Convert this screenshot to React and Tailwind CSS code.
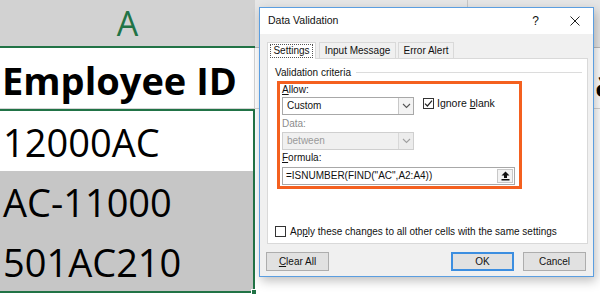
import React from 'react';

const ui = { fontFamily: '"Liberation Sans", Arial, sans-serif' };
const cell = { fontFamily: '"Open Sans", "Noto Sans", sans-serif' };

function Check({ checked }) {
  return (
    <span className="flex h-[11px] w-[11px] shrink-0 items-center justify-center border border-[#333] bg-white">
      {checked && (
        <svg width="9" height="9" viewBox="0 0 9 9">
          <path d="M1 4.6 L3.4 7 L8 1.6" fill="none" stroke="#222" strokeWidth="1.2" />
        </svg>
      )}
    </span>
  );
}

function Chevron({ color = '#555' }) {
  return (
    <svg width="9" height="6" viewBox="0 0 9 6">
      <path d="M1 1 L4.5 4.5 L8 1" fill="none" stroke={color} strokeWidth="1.1" />
    </svg>
  );
}

function Select({ value, disabled }) {
  return (
    <div
      className={`flex h-[18px] w-[132px] items-center border ${
        disabled ? 'border-[#cfcfcf] bg-[#f0f0f0] text-[#9a9a9a]' : 'border-[#a8a8a8] bg-white text-[#111]'
      }`}
    >
      <span className="flex-1 pl-[4px] text-[10px] leading-none">{value}</span>
      <span
        className={`flex h-full w-[15px] items-center justify-center border-l ${
          disabled ? 'border-[#d8d8d8] bg-[#ececec]' : 'border-[#c8c8c8] bg-[#f3f3f3]'
        }`}
      >
        <Chevron color={disabled ? '#a0a0a0' : '#555'} />
      </span>
    </div>
  );
}

function Btn({ children, primary, className = '' }) {
  return (
    <div
      className={`flex h-[19px] w-[63px] items-center justify-center bg-[#e1e1e1] text-[10px] text-[#111] ${
        primary ? 'border-2 border-[#3c8ee0]' : 'border border-[#adadad]'
      } ${className}`}
    >
      {children}
    </div>
  );
}

function Dialog() {
  return (
    <div
      className="absolute left-[259px] top-[7px] flex h-[270px] w-[335px] flex-col border border-[#5b9ee0] bg-[#f0f0f0] shadow-[2px_4px_10px_rgba(0,0,0,0.25)]"
      style={ui}
    >
      <div className="flex h-[26px] items-center bg-white pl-[8px] pr-[13px] text-[10.5px] text-[#111]">
        <span className="flex-1">Data Validation</span>
        <span className="mr-[31px] text-[12px]">?</span>
        <svg width="10" height="10" viewBox="0 0 10 10">
          <path d="M0.5 0.5 L9.5 9.5 M9.5 0.5 L0.5 9.5" stroke="#222" strokeWidth="1" />
        </svg>
      </div>

      <div className="px-[7px] pt-[8px]">
        <div className="flex items-end whitespace-nowrap text-[10px] text-[#111]">
          <div className="relative z-10 -mb-px flex h-[17px] w-[49px] items-center justify-center border border-b-0 border-[#d9d9d9] bg-white">
            <span className="border border-dotted border-[#555] px-[2px] leading-[12px]">Settings</span>
          </div>
          <div className="ml-[3px] flex h-[16px] w-[77px] items-center justify-center border border-b-0 border-[#d9d9d9] bg-[#f0f0f0]">
            Input Message
          </div>
          <div className="ml-[2px] flex h-[16px] w-[56px] items-center justify-center border border-b-0 border-[#d9d9d9] bg-[#f0f0f0]">
            Error Alert
          </div>
        </div>

        <div className="h-[186px] w-[321px] border border-[#d9d9d9] bg-white pl-[7px] pr-[5px] pt-[6px] text-[10px] text-[#111]">
          <div className="flex items-center leading-[15px]">
            <span>Validation criteria</span>
            <span className="ml-[5px] h-px flex-1 bg-[#dcdcdc]" />
          </div>

          <div className="ml-[2px] mt-[1px] h-[108px] w-[245px] border-[3px] border-[#f4601f] pl-[2px]">
            <div className="leading-[11px]">
              <span className="underline">A</span>llow:
            </div>
            <div className="mt-[2px] flex items-start">
              <Select value="Custom" />
              <div className="ml-[9px] mt-[1px] flex items-center gap-[3px] whitespace-nowrap">
                <Check checked />
                <span className="text-[10.5px] leading-none">
                  Ignore <span className="underline">b</span>lank
                </span>
              </div>
            </div>
            <div className="mt-[3px] leading-[11px] text-[#8c8c8c]">Data:</div>
            <div className="mt-[3px]">
              <Select value="between" disabled />
            </div>
            <div className="mt-[2px] leading-[11px]">
              <span className="underline">F</span>ormula:
            </div>
            <div className="mt-[4px] flex h-[18px] w-[233px] items-center border border-[#a8a8a8] bg-white">
              <span className="flex-1 pl-[3px] text-[10px] leading-none">=ISNUMBER(FIND("AC",A2:A4))</span>
              <span className="mr-px flex h-[14px] w-[16px] items-center justify-center border border-[#c8c8c8] bg-[#f3f3f3]">
                <svg width="9" height="10" viewBox="0 0 9 10">
                  <path d="M4.5 0.5 L8.5 4.5 L6 4.5 L6 7 L3 7 L3 4.5 L0.5 4.5 Z" fill="#111" />
                  <rect x="0.5" y="8" width="8" height="1.5" fill="#111" />
                </svg>
              </span>
            </div>
          </div>

          <div className="mt-[37px] flex items-center gap-[4px] whitespace-nowrap">
            <Check />
            <span className="leading-none">
              Ap<span className="underline">p</span>ly these changes to all other cells with the same settings
            </span>
          </div>
        </div>

        <div className="mt-[8px] flex">
          <Btn className="ml-[-1px]">
            <span>
              <span className="underline">C</span>lear All
            </span>
          </Btn>
          <div className="flex-1" />
          <Btn primary>OK</Btn>
          <Btn className="ml-[9px]">Cancel</Btn>
        </div>
      </div>
    </div>
  );
}

export default function App() {
  return (
    <div className="relative h-[295px] w-[600px] overflow-hidden bg-white">
      <div className="flex">
        <div className="w-[255px] shrink-0">
          <div className="flex h-[48px] items-center justify-center border-b-2 border-[#217346] bg-[#d2d2d2] text-[34px] leading-none text-[#217346]" style={cell}>
            A
          </div>
          <div className="flex h-[61px] items-center whitespace-nowrap border-b border-r border-[#d4d4d4] pl-[2px] pt-[4px] text-[38px] font-bold text-black" style={cell}>
            Employee ID
          </div>
          <div className="relative border-2 border-l-0 border-[#217346]" style={cell}>
            <div className="flex h-[60px] items-center bg-white pl-[3px] pt-[2px] text-[38px] text-black">12000AC</div>
            <div className="flex h-[60px] items-center bg-[#c6c6c6] pl-[3px] pt-[2px] text-[38px] text-black">AC-11000</div>
            <div className="flex h-[60px] items-center bg-[#c6c6c6] pl-[3px] pt-[2px] text-[38px] text-black">501AC210</div>
            <span className="absolute bottom-[-4px] right-[-4px] h-[6px] w-[6px] border border-white bg-[#217346]" />
          </div>
        </div>
        <div className="flex-1">
          <div className="flex h-[48px] border-b border-[#bdbdbd] bg-[#e6e6e6]">
            <div className="w-[213px] border-r border-[#c6c6c6]" />
          </div>
          <div className="flex h-[61px] items-center border-b border-[#d4d4d4] pl-[340px] pt-[8px] text-[38px] font-bold text-black" style={cell}>
            a
          </div>
        </div>
      </div>
      <Dialog />
    </div>
  );
}
